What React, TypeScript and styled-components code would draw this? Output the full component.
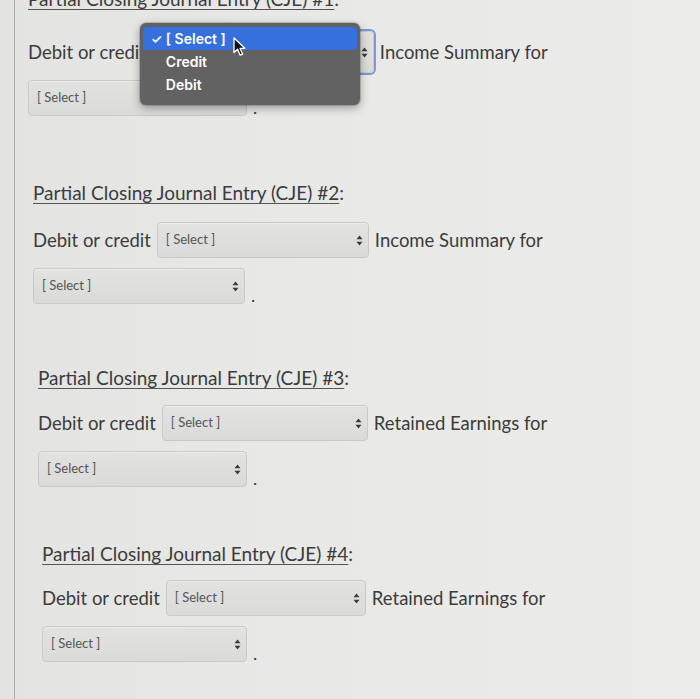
import React from 'react'
import styled, { createGlobalStyle } from 'styled-components'

interface Entry {
  n: number
  account: string
  indent: number
  firstWidth: number
  secondWidth: number
  titleGap: number
  after: number
  open?: boolean
}

const entries: Entry[] = [
  { n: 1, account: 'Income Summary for', indent: 13, firstWidth: 222, secondWidth: 219, titleGap: 23, after: 65, open: true },
  { n: 2, account: 'Income Summary for', indent: 18, firstWidth: 212, secondWidth: 212, titleGap: 17, after: 62 },
  { n: 3, account: 'Retained Earnings for', indent: 23, firstWidth: 206, secondWidth: 209, titleGap: 15, after: 55 },
  { n: 4, account: 'Retained Earnings for', indent: 27, firstWidth: 200, secondWidth: 205, titleGap: 14, after: 60 }
]

export default function App() {
  return (
    <>
      <GlobalStyle />
      <Page>
        <Content>
          {entries.map((e) => (
            <Section key={e.n} $indent={e.indent} $after={e.after}>
              <Title $gap={e.titleGap}>
                <Underlined>Partial Closing Journal Entry (CJE) #{e.n}</Underlined>:
              </Title>
              <Row>
                <Label>Debit or credit</Label>
                <SelectBox $width={e.firstWidth} $focused={e.open}>
                  <SelectText>[ Select ]</SelectText>
                  <Arrows />
                  {e.open && <OptionMenu />}
                </SelectBox>
                <Label>{e.account}</Label>
              </Row>
              <Row $second>
                <SelectBox $width={e.secondWidth}>
                  <SelectText>[ Select ]</SelectText>
                  <Arrows />
                </SelectBox>
                <Period>.</Period>
              </Row>
            </Section>
          ))}
        </Content>
      </Page>
    </>
  )
}

function Arrows() {
  return (
    <ArrowIcon width="7" height="11" viewBox="0 0 7 11">
      <path d="M3.5 0.5 L6.5 4.2 H0.5 Z" fill="#3a3a3a" />
      <path d="M3.5 10.5 L6.5 6.8 H0.5 Z" fill="#3a3a3a" />
    </ArrowIcon>
  )
}

function OptionMenu() {
  return (
    <Menu>
      <MenuItem $active>
        <Check>✓</Check>[ Select ]
      </MenuItem>
      <MenuItem>Credit</MenuItem>
      <MenuItem>Debit</MenuItem>
      <Cursor width="14" height="20" viewBox="0 0 14 20">
        <path
          d="M1 1 L1 15.5 L4.6 12.2 L7.2 18.2 L9.6 17.1 L7 11.3 L11.8 11.3 Z"
          fill="#111"
          stroke="#fff"
          strokeWidth="1.3"
          strokeLinejoin="round"
        />
      </Cursor>
    </Menu>
  )
}

const GlobalStyle = createGlobalStyle`
  html, body {
    margin: 0;
    padding: 0;
    background: #e7e7e5;
  }
  body {
    font-family: Lato, "Open Sans", sans-serif;
    overflow: hidden;
  }
`

const Page = styled.div`
  width: 700px;
  height: 699px;
  padding-left: 14px;
  box-sizing: border-box;
  background: linear-gradient(90deg, #e3e3e1 0%, #e8e8e6 40%, #ebebe9 100%);
  overflow: hidden;
`

const Content = styled.div`
  margin-top: -13px;
  min-height: 760px;
  border-left: 1px solid #a9a9a7;
`

const Section = styled.section<{ $indent: number; $after: number }>`
  padding-left: ${(p) => p.$indent}px;
  margin-bottom: ${(p) => p.$after}px;
  color: #3c3c3c;
`

const Title = styled.div<{ $gap: number }>`
  font-size: 19px;
  line-height: 24px;
  margin-bottom: ${(p) => p.$gap}px;
`

const Underlined = styled.span`
  text-decoration: underline;
  text-decoration-color: #555;
  text-decoration-thickness: 1px;
  text-underline-offset: 3px;
`

const Row = styled.div<{ $second?: boolean }>`
  display: flex;
  align-items: center;
  gap: 6px;
  height: 36px;
  margin-top: ${(p) => (p.$second ? 10 : 0)}px;
`

const Label = styled.span`
  font-size: 18.5px;
  white-space: nowrap;
`

const SelectBox = styled.div<{ $width: number; $focused?: boolean }>`
  position: relative;
  flex-shrink: 0;
  width: ${(p) => p.$width}px;
  height: ${(p) => (p.$focused ? 42 : 36)}px;
  box-sizing: border-box;
  display: flex;
  align-items: center;
  justify-content: space-between;
  padding: 0 5px 0 8px;
  background: linear-gradient(180deg, #e2e2e1 0%, #dadad9 100%);
  border: 1px solid #c9c9c7;
  border-radius: 4px;
  box-shadow: ${(p) => (p.$focused ? '0 0 0 2px #7b99d8' : 'inset 0 1px 0 #ececeb')};
`

const SelectText = styled.span`
  font-size: 13px;
  color: #555;
  margin-top: -2px;
`

const ArrowIcon = styled.svg`
  flex-shrink: 0;
`

const Period = styled.span`
  font-size: 18px;
  align-self: flex-end;
  line-height: 18px;
`

const Menu = styled.div`
  position: absolute;
  left: -13px;
  top: -9px;
  width: 220px;
  box-sizing: border-box;
  padding: 4px 3px 9px;
  background: #626262;
  border-radius: 6px;
  box-shadow: 0 3px 10px rgba(0, 0, 0, 0.35), 0 0 0 1px rgba(0, 0, 0, 0.15);
  z-index: 10;
`

const MenuItem = styled.div<{ $active?: boolean }>`
  display: flex;
  align-items: center;
  height: 23px;
  padding-left: 23px;
  position: relative;
  font-family: Inter, "Liberation Sans", sans-serif;
  font-size: 14px;
  font-weight: 600;
  color: #fff;
  background: ${(p) => (p.$active ? '#3570dc' : 'transparent')};
  border-radius: 4px;
`

const Check = styled.span`
  position: absolute;
  left: 8px;
  font-size: 13px;
`

const Cursor = styled.svg`
  position: absolute;
  left: 93px;
  top: 14px;
`
